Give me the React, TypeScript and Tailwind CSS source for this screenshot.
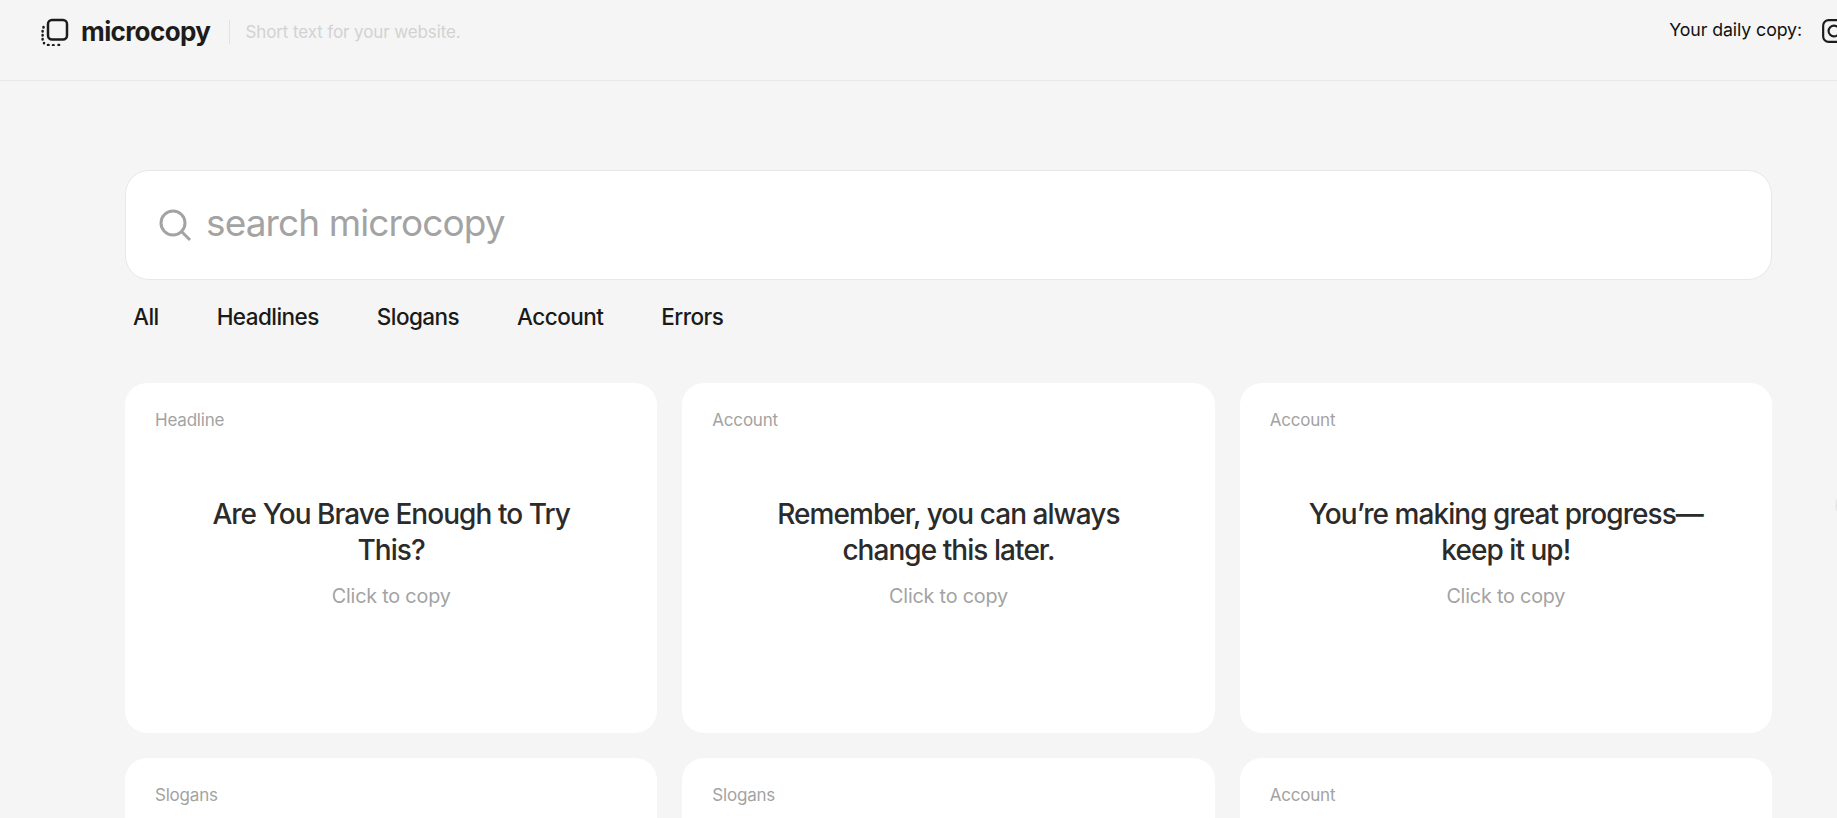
const cards = [
  { tag: "Headline", text: "Are You Brave Enough to Try This?" },
  { tag: "Account", text: "Remember, you can always change this later." },
  { tag: "Account", text: "You’re making great progress—keep it up!" },
  { tag: "Slogans", text: "" },
  { tag: "Slogans", text: "" },
  { tag: "Account", text: "" },
];

const tabs = ["All", "Headlines", "Slogans", "Account", "Errors"];

function Logo() {
  return (
    <svg width="28" height="28" viewBox="0 0 28 28" fill="none" stroke="#1c1c1c" strokeWidth="2.5">
      <rect x="7" y="2" width="19" height="19.5" rx="4" />
      <path d="M2.5 9v.6M1.6 13v.6M1.6 17v.6M1.6 21v.6M3 25v.3M7 27h.6M12 27.2h.6M17.5 27h.6" strokeLinecap="round" />
    </svg>
  );
}

function Card({ tag, text }: { tag: string; text: string }) {
  return (
    <div className="h-[350px] rounded-[22px] bg-white px-[30px] pt-[27px]">
      <div className="text-[17px] leading-5 tracking-[-0.2px] text-[#a3a3a3]">{tag}</div>
      {text && (
        <div className="mx-auto mt-[66px] w-[400px] text-center">
          <div className="text-[28px] leading-9 font-medium tracking-[-0.95px] text-[#2b2b2b]">{text}</div>
          <div className="mt-[13.5px] text-[19.8px] leading-7 tracking-[-0.2px] text-[#a3a3a3]">Click to copy</div>
        </div>
      )}
    </div>
  );
}

export default function App() {
  return (
    <div className="relative h-[818px] overflow-hidden bg-[#f5f5f5] font-['Inter',sans-serif]">
      <div className="w-[1897px]">
        <header className="flex h-[81px] items-start justify-between border-b border-[#e8e8e8] pr-[50px]">
          <div className="flex items-center pt-[16px] pl-[41px]">
            <Logo />
            <span className="ml-[12px] text-[26px] leading-8 font-bold tracking-[-0.6px] text-[#1c1c1c]">microcopy</span>
            <span className="mr-[15px] ml-[19px] h-6 w-px bg-[#e2e2e2]" />
            <span className="pt-[2px] text-[17px] tracking-[-0.1px] text-[#d2d2d2]">Short text for your website.</span>
          </div>
          <div className="flex items-center pt-[16px]">
            <span className="text-[17.75px] leading-6 tracking-[-0.1px] text-[#111]">Your daily copy:</span>
            <svg className="mt-[2px] ml-[19px]" width="26" height="26" viewBox="0 0 24 24" fill="none" stroke="#1c1c1c" strokeWidth="2">
              <rect x="2" y="2" width="20" height="20" rx="5" />
              <circle cx="12" cy="12" r="5" />
            </svg>
          </div>
        </header>

        <main className="mx-[125px] pt-[89px]">
          <div className="flex h-[110px] items-center rounded-[24px] border border-[#e8e8e8] bg-white pl-[32px]">
            <svg width="34" height="34" viewBox="0 0 34 34" fill="none" stroke="#a3a3a3" strokeWidth="3">
              <circle cx="15" cy="15" r="12" />
              <path d="M24 24l8 8" />
            </svg>
            <span className="ml-[14px] pb-[5px] text-[37px] leading-none tracking-[-0.9px] text-[#a3a3a3]">search microcopy</span>
          </div>

          <nav className="mt-[23px] flex gap-[58px] pl-[8px]">
            {tabs.map((t) => (
              <span key={t} className="text-[22.5px] leading-7 font-[550] tracking-[-0.55px] text-[#1a1a1a]">{t}</span>
            ))}
          </nav>

          <div className="mt-[52px] grid grid-cols-3 gap-[25px]">
            {cards.map((c, i) => (
              <Card key={i} tag={c.tag} text={c.text} />
            ))}
          </div>
        </main>
      </div>
      {/* clipped floating button at the window edge */}
      <div className="absolute top-[493px] -right-[22px] h-6 w-6 rounded-full bg-[#e8e8e8]" />
    </div>
  );
}
